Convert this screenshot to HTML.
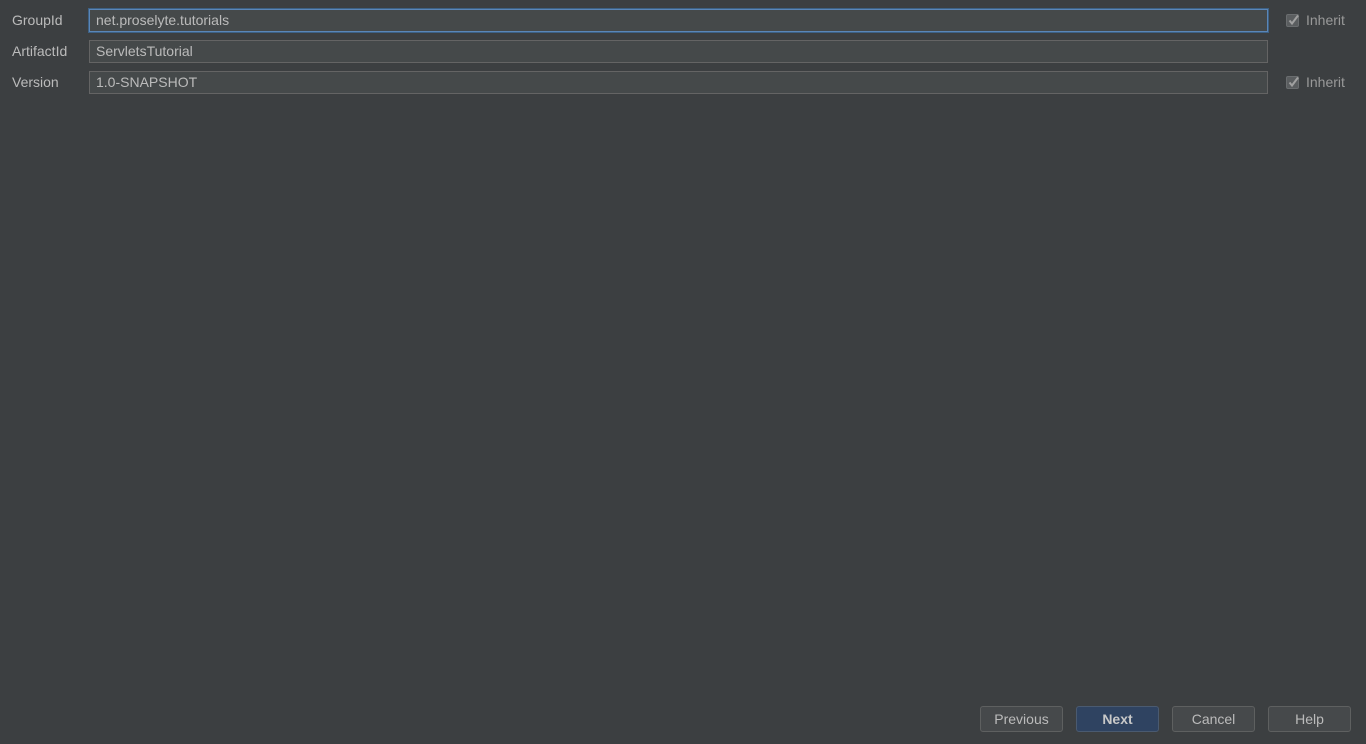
<!DOCTYPE html>
<html><head><style>
body{margin:0;width:1366px;height:744px;background:#3c3f41;font-family:"Liberation Sans","DejaVu Sans",sans-serif;font-size:14px;color:#bbbbbb;position:relative;overflow:hidden}
.l{position:absolute;left:12px}
.f{position:absolute;left:89px;width:1179px;height:23px;background:#45494a;border:1px solid #646464;box-sizing:border-box;padding-left:6px;line-height:21px;color:#bbbbbb}
.foc{border:1px solid #5a86b8;box-shadow:0 0 0 1px #3d6185}
.cb{position:absolute;left:1286px;width:13px;height:13px;background:#5a5d5f;border:1px solid #6a6d6f;box-sizing:border-box;border-radius:2px}
.cb svg{position:absolute;left:0;top:-1px}
.in{position:absolute;left:1306px;color:#999}
.b{position:absolute;top:706px;width:83px;height:26px;box-sizing:border-box;border:1px solid #5e6060;border-radius:3px;background:#46494b;text-align:center;line-height:24px;color:#bbbbbb}
</style></head><body>
<div class="l" style="top:12px">GroupId</div>
<div class="f foc" style="top:9px">net.proselyte.tutorials</div>
<div class="cb" style="top:14px"><svg width="13" height="13" viewBox="0 0 13 13"><path d="M2.5 6.5 L5 9.5 L11 1.5" stroke="#a0a0a0" stroke-width="2" fill="none"/></svg></div>
<div class="in" style="top:12px">Inherit</div>
<div class="l" style="top:43px">ArtifactId</div>
<div class="f" style="top:40px">ServletsTutorial</div>
<div class="l" style="top:74px">Version</div>
<div class="f" style="top:71px">1.0-SNAPSHOT</div>
<div class="cb" style="top:76px"><svg width="13" height="13" viewBox="0 0 13 13"><path d="M2.5 6.5 L5 9.5 L11 1.5" stroke="#a0a0a0" stroke-width="2" fill="none"/></svg></div>
<div class="in" style="top:74px">Inherit</div>
<div class="b" style="left:980px">Previous</div>
<div class="b" style="left:1076px;background:#2f4361;border-color:#4a5a70;font-weight:bold;color:#c8c8c8">Next</div>
<div class="b" style="left:1172px">Cancel</div>
<div class="b" style="left:1268px">Help</div>
</body></html>
